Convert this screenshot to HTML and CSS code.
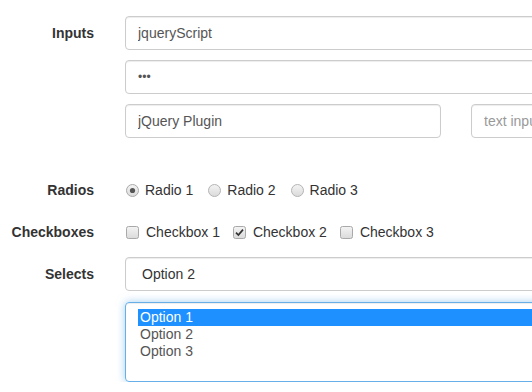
FILE: index.html
```html
<!DOCTYPE html>
<html lang="en">
<head>
    <meta charset="UTF-8">
    <meta name="viewport" content="width=device-width, initial-scale=1.0">
    <title>Form controls</title>
    <link rel="stylesheet" href="styles.css">
</head>
<body>
    <form class="form">
        <!-- Inputs -->
        <div class="group group-inputs">
            <div class="label">Inputs</div>
            <div class="controls">
                <input class="field" type="text" value="jqueryScript">
                <input class="field password" type="password" value="abc">
                <div class="pair">
                    <input class="field" type="text" value="jQuery Plugin">
                    <input class="field" type="text" placeholder="text input">
                </div>
            </div>
        </div>

        <!-- Radios -->
        <div class="group group-radios">
            <div class="label label-inline">Radios</div>
            <div class="controls inline">
                <span class="choice">
                    <svg class="mark" width="13" height="13" viewBox="0 0 13 13">
                        <defs>
                            <linearGradient id="rg" x1="0" y1="0" x2="0" y2="1">
                                <stop offset="0" stop-color="#f4f4f4"/>
                                <stop offset="1" stop-color="#dadada"/>
                            </linearGradient>
                        </defs>
                        <circle cx="6.5" cy="6.5" r="6" fill="url(#rg)" stroke="#a9a9a9"/>
                        <circle cx="6.5" cy="6.5" r="2.6" fill="#555"/>
                    </svg>
                    Radio 1
                </span>
                <span class="choice">
                    <svg class="mark" width="13" height="13" viewBox="0 0 13 13">
                        <circle cx="6.5" cy="6.5" r="6" fill="url(#rg)" stroke="#b4b4b4"/>
                    </svg>
                    Radio 2
                </span>
                <span class="choice">
                    <svg class="mark" width="13" height="13" viewBox="0 0 13 13">
                        <circle cx="6.5" cy="6.5" r="6" fill="url(#rg)" stroke="#b4b4b4"/>
                    </svg>
                    Radio 3
                </span>
            </div>
        </div>

        <!-- Checkboxes -->
        <div class="group group-checks">
            <div class="label label-inline">Checkboxes</div>
            <div class="controls inline">
                <span class="choice">
                    <svg class="mark" width="13" height="13" viewBox="0 0 13 13">
                        <rect x="0.5" y="0.5" width="12" height="12" rx="2" fill="url(#rg)" stroke="#a9a9a9"/>
                    </svg>
                    Checkbox 1
                </span>
                <span class="choice">
                    <svg class="mark" width="13" height="13" viewBox="0 0 13 13">
                        <rect x="0.5" y="0.5" width="12" height="12" rx="2" fill="url(#rg)" stroke="#a9a9a9"/>
                        <path d="M3 6.6 L5.4 9 L10 3.6" fill="none" stroke="#333" stroke-width="1.7"/>
                    </svg>
                    Checkbox 2
                </span>
                <span class="choice">
                    <svg class="mark" width="13" height="13" viewBox="0 0 13 13">
                        <rect x="0.5" y="0.5" width="12" height="12" rx="2" fill="url(#rg)" stroke="#a9a9a9"/>
                    </svg>
                    Checkbox 3
                </span>
            </div>
        </div>

        <!-- Selects -->
        <div class="group group-selects">
            <div class="label">Selects</div>
            <div class="controls">
                <div class="field select">Option 2</div>
                <div class="listbox">
                    <div class="option selected">Option 1</div>
                    <div class="option">Option 2</div>
                    <div class="option">Option 3</div>
                </div>
            </div>
        </div>
    </form>
</body>
</html>
```

FILE: styles.css
```css
html, body {
    margin: 0;
    padding: 0;
    background: #fff;
    overflow: hidden;
}
body {
    font-family: "Liberation Sans", Arial, Helvetica, sans-serif;
    font-size: 14px;
    line-height: 20px;
    color: #333;
}
.form {
    padding-top: 16px;
    width: 802px;
}
.group {
    display: grid;
    grid-template-columns: 110px 692px;
}
.label {
    font-weight: bold;
    text-align: right;
    padding: 7px 16px 0 0;
    color: #333;
}
.label-inline {
    padding-top: 0;
}
.controls {
    padding: 0 15px;
    display: flex;
    flex-direction: column;
    gap: 10px;
}
.field {
    display: block;
    box-sizing: border-box;
    width: 100%;
    height: 34px;
    margin: 0;
    padding: 6px 12px;
    font: inherit;
    color: #555;
    background: #fff;
    border: 1px solid #ccc;
    border-radius: 4px;
    box-shadow: inset 0 1px 1px rgba(0, 0, 0, 0.075);
    outline: none;
}
.field::placeholder {
    color: #999;
}
.password {
    font-size: 12px;
}
.pair {
    display: grid;
    grid-template-columns: 1fr 1fr;
    gap: 30px;
}

.group-radios {
    margin-top: 42px;
}
.group-checks {
    margin-top: 22px;
}
.group-selects {
    margin-top: 15px;
}

.controls.inline {
    flex-direction: row;
    align-items: center;
    padding: 0 0 0 16px;
    gap: 15px;
}
.group-checks .controls.inline {
    gap: 13px;
}
.choice {
    display: inline-flex;
    align-items: center;
    white-space: nowrap;
    color: #333;
}
.mark {
    margin-right: 6px;
    flex: none;
}
.group-checks .mark {
    margin-right: 7px;
}

.select {
    padding-left: 16px;
    color: #333;
}
.listbox {
    box-sizing: border-box;
    height: 80px;
    margin-top: 1px;
    padding: 6px 0 0 12px;
    border: 1px solid #66afe9;
    border-radius: 4px;
    box-shadow: inset 0 1px 1px rgba(0, 0, 0, 0.075), 0 0 8px rgba(102, 175, 233, 0.6);
    line-height: 17px;
    color: #555;
}
.option {
    padding-left: 2px;
}
.option.selected {
    background: #1e90ff;
    color: #fff;
}
```
